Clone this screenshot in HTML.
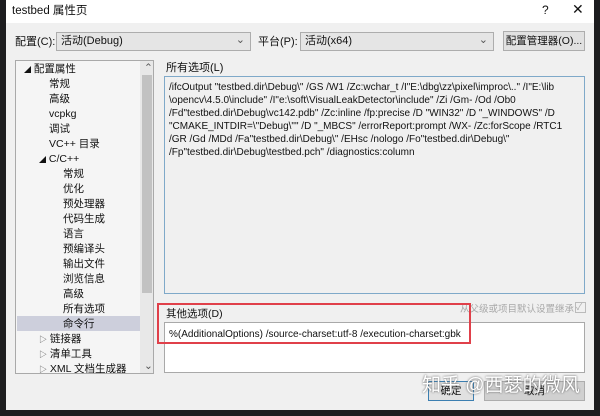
<!DOCTYPE html>
<html><head><meta charset="utf-8"><style>
*{margin:0;padding:0;box-sizing:border-box}
body{width:600px;height:416px;background:#1d1d1f;position:relative;overflow:hidden;font-family:"Liberation Sans","Noto Sans CJK SC",sans-serif;font-size:11px;line-height:13px;color:#111}
.dlg{position:absolute;left:6px;top:0;width:588px;height:410px;background:#f0f0f0}
.title{position:absolute;left:0;top:0;width:588px;height:23px;background:#fff;font-size:11.5px;padding:5px 0 0 6px}
.a{position:absolute;white-space:nowrap}
.combo{position:absolute;height:19px;background:#e5e5e5;border:1px solid #adadad;padding:2px 4px;white-space:nowrap}
.btn{position:absolute;height:20px;background:#e1e1e1;border:1px solid #adadad;text-align:center;padding-top:3px;white-space:nowrap;font-size:10.5px}
.tree{position:absolute;left:9px;top:60px;width:139px;height:314px;background:#f5f5f5;border:1px solid #a9a9a9;overflow:hidden}
.tree div{position:absolute;white-space:nowrap;font-size:10.5px;line-height:14px}
.ta{position:absolute;left:158px;top:76px;width:421px;height:218px;background:#f0f0f0;border:1px solid #7fa9c9;padding:4px 4px;font-size:10px;line-height:13px}
</style></head><body>
<div class="dlg">
<div class="title">testbed 属性页</div>
<div class="a" style="left:536px;top:4px;font-size:12px">?</div>
<div class="a" style="left:566px;top:3px;font-size:14px">✕</div>
<div class="a" style="left:9px;top:36px">配置(C):</div>
<div class="combo" style="left:50px;top:32px;width:195px">活动(Debug)<span style="position:absolute;right:5px;top:1px;color:#555">⌄</span></div>
<div class="a" style="left:252px;top:36px">平台(P):</div>
<div class="combo" style="left:294px;top:32px;width:194px">活动(x64)<span style="position:absolute;right:5px;top:1px;color:#555">⌄</span></div>
<div class="btn" style="left:497px;top:31px;width:82px">配置管理器(O)...</div>
<div class="tree">
<div style="left:8px;top:1px"><span style="font-size:7px">◢</span> 配置属性</div>
<div style="left:33px;top:16px">常规</div>
<div style="left:33px;top:31px">高级</div>
<div style="left:33px;top:46px">vcpkg</div>
<div style="left:33px;top:61px">调试</div>
<div style="left:33px;top:76px">VC++ 目录</div>
<div style="left:23px;top:91px"><span style="font-size:7px">◢</span> C/C++</div>
<div style="left:47px;top:106px">常规</div>
<div style="left:47px;top:121px">优化</div>
<div style="left:47px;top:136px">预处理器</div>
<div style="left:47px;top:151px">代码生成</div>
<div style="left:47px;top:166px">语言</div>
<div style="left:47px;top:181px">预编译头</div>
<div style="left:47px;top:196px">输出文件</div>
<div style="left:47px;top:211px">浏览信息</div>
<div style="left:47px;top:226px">高级</div>
<div style="left:47px;top:241px">所有选项</div>
<div style="left:1px;top:255px;width:123px;height:15px;background:#cdcfdc"></div>
<div style="left:47px;top:256px">命令行</div>
<div style="left:23px;top:271px"><span style="font-size:8px;color:#555">▷</span> 链接器</div>
<div style="left:23px;top:286px"><span style="font-size:8px;color:#555">▷</span> 清单工具</div>
<div style="left:23px;top:301px"><span style="font-size:8px;color:#555">▷</span> XML 文档生成器</div>
<div style="left:124px;top:0;width:14px;height:312px;background:#e8e8e8"></div>
<div style="left:126px;top:14px;width:10px;height:218px;background:#c2c2c2"></div>
<div style="left:128px;top:0;color:#555">⌃</div>
<div style="left:128px;top:298px;color:#555">⌄</div>
</div>
<div class="a" style="left:160px;top:62px">所有选项(L)</div>
<div class="ta">/ifcOutput "testbed.dir\Debug\" /GS /W1 /Zc:wchar_t /I"E:\dbg\zz\pixel\improc\.." /I"E:\lib<br>\opencv\4.5.0\include" /I"e:\soft\VisualLeakDetector\include" /Zi /Gm- /Od /Ob0<br>/Fd"testbed.dir\Debug\vc142.pdb" /Zc:inline /fp:precise /D "WIN32" /D "_WINDOWS" /D<br>"CMAKE_INTDIR=\"Debug\"" /D "_MBCS" /errorReport:prompt /WX- /Zc:forScope /RTC1<br>/GR /Gd /MDd /Fa"testbed.dir\Debug\" /EHsc /nologo /Fo"testbed.dir\Debug\"<br>/Fp"testbed.dir\Debug\testbed.pch" /diagnostics:column</div>
<div class="a" style="left:454px;top:303px;color:#a8a8a8;font-size:9.5px">从父级或项目默认设置继承</div>
<div class="a" style="left:569px;top:302px;width:11px;height:11px;border:1px solid #bbb;font-size:9px;color:#aaa;line-height:9px">✓</div>
<div class="a" style="left:158px;top:322px;width:421px;height:51px;background:#fff;border:1px solid #a9a9a9;padding:4px 4px;font-size:10px"><span style="position:relative;top:1px">%(AdditionalOptions) /source-charset:utf-8 /execution-charset:gbk</span></div>
<div class="a" style="left:151px;top:303px;width:314px;height:41px;border:2px solid #e0404a"></div>
<div class="a" style="left:160px;top:308px;font-size:10.5px">其他选项(D)</div>
<div class="btn" style="left:422px;top:381px;width:46px;border:1px solid #3c7fb1">确定</div>
<div class="btn" style="left:478px;top:381px;width:101px;background:#d0d0d0">取消</div>
<div class="a" style="left:416px;top:374px;font-size:19px;line-height:24px;color:#fff;text-shadow:0 0 2px #555">知乎 @西瑟的微风</div>
</div>
</body></html>
